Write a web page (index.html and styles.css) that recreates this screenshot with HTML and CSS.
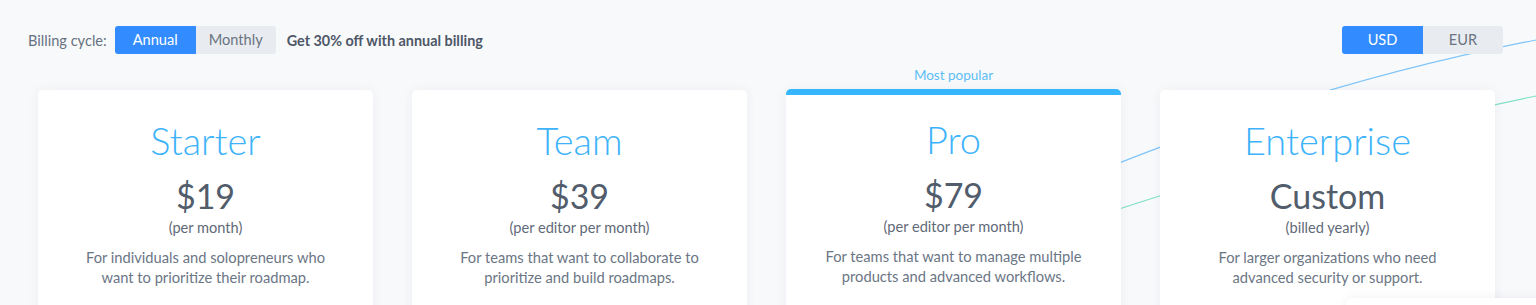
FILE: index.html
```html
<!DOCTYPE html>
<html lang="en">
  <head>
    <meta charset="UTF-8" />
    <meta name="viewport" content="width=device-width, initial-scale=1.0" />
    <title>Pricing</title>
    <link rel="stylesheet" href="styles.css">
  </head>
  <body>
    <div class="page">
      <svg class="lines" width="1536" height="305" viewBox="0 0 1536 305">
        <path d="M980 222 C1150 145 1330 80 1536 40" stroke="#7cc4fb" stroke-width="1.2" fill="none" />
        <path d="M980 258 C1160 190 1380 128 1536 96" stroke="#7fe0c6" stroke-width="1.2" fill="none" />
      </svg>

      <div class="topbar">
        <div class="billing">
          <span class="label">Billing cycle:</span>
          <div class="toggle">
            <span class="opt active">Annual</span>
            <span class="opt">Monthly</span>
          </div>
          <span class="promo">Get 30% off with annual billing</span>
        </div>
        <div class="toggle currency">
          <span class="opt active">USD</span>
          <span class="opt">EUR</span>
        </div>
      </div>

      <div class="plans">
        <div class="card">
          <h2 class="name">Starter</h2>
          <div class="price">$19</div>
          <div class="per">(per month)</div>
          <p class="desc">For individuals and solopreneurs who want to prioritize their roadmap.</p>
        </div>
        <div class="card">
          <h2 class="name">Team</h2>
          <div class="price">$39</div>
          <div class="per">(per editor per month)</div>
          <p class="desc">For teams that want to collaborate to prioritize and build roadmaps.</p>
        </div>
        <div class="card popular">
          <span class="badge">Most popular</span>
          <h2 class="name">Pro</h2>
          <div class="price">$79</div>
          <div class="per">(per editor per month)</div>
          <p class="desc">For teams that want to manage multiple products and advanced workflows.</p>
        </div>
        <div class="card">
          <h2 class="name">Enterprise</h2>
          <div class="price">Custom</div>
          <div class="per">(billed yearly)</div>
          <p class="desc">For larger organizations who need advanced security or support.</p>
        </div>
      </div>

      <div class="peek"></div>
    </div>
  </body>
</html>
```

FILE: styles.css
```css
html,
body {
  margin: 0px;
  padding: 0px;
}
body {
  background-color: #f8f9fb;
  font-family: Lato, "Noto Sans", sans-serif;
  color: #5f6b7a;
}
.page {
  position: relative;
  height: 305px;
  overflow: hidden;
}
.lines {
  position: absolute;
  left: 0px;
  top: 0px;
}
.topbar {
  position: relative;
  display: flex;
  justify-content: space-between;
  align-items: center;
  padding: 26px 33px 0 28px;
}
.billing {
  display: flex;
  align-items: center;
}
.label {
  font-size: 14.6px;
  color: #66717f;
  margin-right: 8px;
}
.toggle {
  display: flex;
  border-radius: 3px;
  overflow: hidden;
}
.toggle .opt {
  width: 80px;
  height: 28px;
  line-height: 28px;
  text-align: center;
  font-size: 14.6px;
  background-color: #e8ecf0;
  color: #6b7482;
}
.toggle .opt.active {
  width: 81px;
  background-color: #338cff;
  color: #fff;
}
.promo {
  margin-left: 11px;
  font-size: 14.4px;
  font-weight: 700;
  color: #4d5767;
}
.plans {
  position: relative;
  display: flex;
  gap: 39px;
  padding: 36px 0 0 38px;
}
.card {
  position: relative;
  width: 335px;
  height: 260px;
  box-sizing: border-box;
  padding-top: 27px;
  background-color: #fff;
  border-radius: 5px;
  box-shadow: 0 0 12px rgba(40, 60, 90, 0.06);
  text-align: center;
}
.card.popular {
  border-top: 6px solid #35b6fe;
  padding-top: 21px;
  margin-top: -1px;
}
.badge {
  position: absolute;
  left: 0px;
  right: 0px;
  bottom: 100%;
  margin-bottom: 12px;
  font-size: 13.5px;
  color: #5cbdf6;
}
.name {
  margin: 0px;
  font-size: 38px;
  line-height: 46px;
  font-weight: 300;
  color: #3cb3fa;
}
.price {
  margin-top: 13px;
  font-size: 34px;
  line-height: 40px;
  color: #525d6c;
}
.per {
  margin-top: 2px;
  font-size: 14.6px;
  line-height: 20px;
  color: #5f6a78;
}
.desc {
  width: 260px;
  margin: 9px auto 0;
  font-size: 14.7px;
  line-height: 20px;
  color: #6b7685;
}
.peek {
  position: absolute;
  left: 1346px;
  top: 298px;
  width: 220px;
  height: 40px;
  background-color: #fff;
  border-radius: 6px;
  box-shadow: 0 0 10px rgba(40, 60, 90, 0.08);
}
```
